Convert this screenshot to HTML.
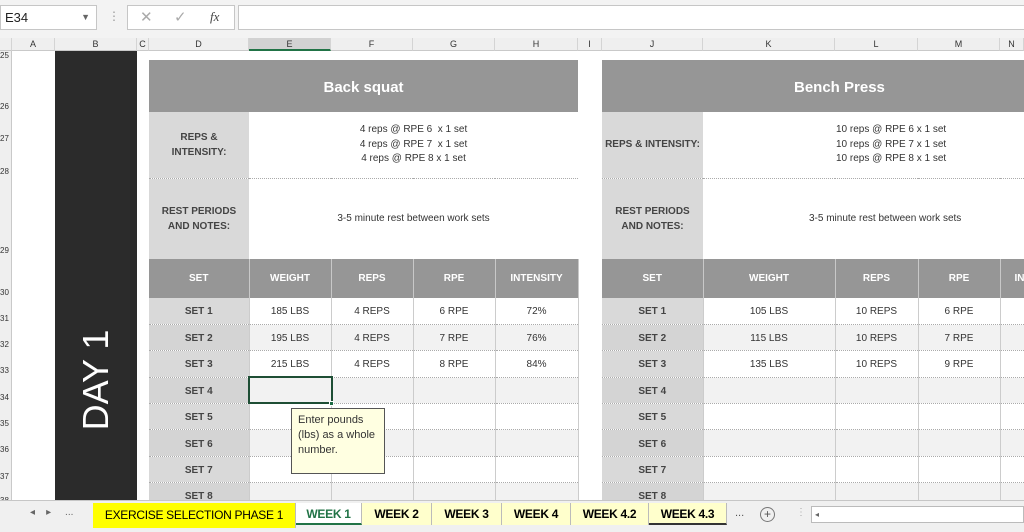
<!DOCTYPE html>
<html><head><meta charset="utf-8"><style>
*{box-sizing:border-box;margin:0;padding:0}
body{width:1024px;height:532px;overflow:hidden;background:#fff;font-family:"Liberation Sans",Arial,sans-serif;position:relative}
.abs{position:absolute}
.top{left:0;top:0;width:1024px;height:38px;background:#f3f3f3}
.nb{left:0;top:5px;width:97px;height:25px;background:#fff;border:1px solid #c6c6c6;font-size:13px;line-height:23px;padding-left:4px;color:#222}
.fx{left:127px;top:5px;width:108px;height:25px;background:#fff;border:1px solid #c6c6c6}
.fb{left:238px;top:5px;width:790px;height:25px;background:#fff;border:1px solid #c6c6c6}
.colh{top:38px;height:13px;background:#efefef;border-bottom:1px solid #c9c9c9;border-right:1px solid #d4d4d4;font-size:9px;text-align:center;line-height:13px;color:#333}
.rowh{left:0;width:12px;background:#efefef;border-right:1px solid #c9c9c9;top:51px;height:449px}
.rn{left:0;font-size:8px;color:#333;width:12px}
table{position:absolute;border-collapse:collapse;table-layout:fixed;font-size:10px;color:#333}
td{text-align:center;vertical-align:middle;padding:0;overflow:hidden;white-space:nowrap}
.t td.ttl{background:#969696;color:#fff;font-weight:bold;font-size:15px;height:52px;padding-top:2px}
.lab{background:#d9d9d9;font-weight:bold;color:#444;font-size:10px;line-height:15px;white-space:normal}
.hd td{background:#969696;color:#fff;font-weight:bold;height:39px;border-right:1px solid #c8c8c8}
.s td{height:26.4px;border-bottom:1px dotted #aaa;border-right:1px solid #ccc;padding-top:2px}
.s td:first-child{background:#d9d9d9;font-weight:bold;color:#444}
.s.a td{background:#f2f2f2}
.s.a td:first-child{background:#d4d4d4}
.tabs{left:0;top:500px;width:1024px;height:32px;background:#f0f0f0;border-top:1px solid #c6c6c6}
.tab{top:503px;height:22px;font-size:12px;font-weight:bold;line-height:22px;text-align:center;background:#ffffcc;border-right:1px solid #bbb;letter-spacing:-0.3px}
</style></head><body>
<div class="abs top"></div>
<div class="abs nb">E34<span style="position:absolute;right:6px;top:0;font-size:9px;color:#666">▼</span></div>
<div class="abs" style="left:108px;top:9px;color:#999;font-size:12px">⋮</div>
<div class="abs fx"><span style="position:absolute;left:12px;top:2px;color:#aaa;font-size:15px">✕</span><span style="position:absolute;left:46px;top:2px;color:#aaa;font-size:15px">✓</span><span style="position:absolute;left:82px;top:3px;color:#444;font-size:13px;font-style:italic;font-family:'Liberation Serif',serif">fx</span></div>
<div class="abs fb"></div>
<div class="abs colh" style="left:0;width:12px"></div>
<div class="abs colh" style="left:12px;width:43px">A</div>
<div class="abs colh" style="left:55px;width:82px">B</div>
<div class="abs colh" style="left:137px;width:12px">C</div>
<div class="abs colh" style="left:149px;width:100px">D</div>
<div class="abs colh" style="left:249px;width:82px;background:#d2d2d2;border-bottom:2px solid #217346">E</div>
<div class="abs colh" style="left:331px;width:82px">F</div>
<div class="abs colh" style="left:413px;width:82px">G</div>
<div class="abs colh" style="left:495px;width:83px">H</div>
<div class="abs colh" style="left:578px;width:24px">I</div>
<div class="abs colh" style="left:602px;width:101px">J</div>
<div class="abs colh" style="left:703px;width:132px">K</div>
<div class="abs colh" style="left:835px;width:83px">L</div>
<div class="abs colh" style="left:918px;width:82px">M</div>
<div class="abs colh" style="left:1000px;width:24px">N</div>
<div class="abs rowh"></div>
<div class="abs rn" style="top:51px">25</div><div class="abs rn" style="top:102px">26</div><div class="abs rn" style="top:134px">27</div><div class="abs rn" style="top:167px">28</div><div class="abs rn" style="top:246px">29</div><div class="abs rn" style="top:288px">30</div><div class="abs rn" style="top:314px">31</div><div class="abs rn" style="top:340px">32</div><div class="abs rn" style="top:366px">33</div><div class="abs rn" style="top:393px">34</div><div class="abs rn" style="top:419px">35</div><div class="abs rn" style="top:445px">36</div><div class="abs rn" style="top:472px">37</div><div class="abs rn" style="top:496px">38</div>
<div class="abs" style="left:55px;top:51px;width:82px;height:449px;background:#2b2b2b"></div>
<div class="abs" style="left:96px;top:380px;transform:translate(-50%,-50%) rotate(-90deg);color:#fff;font-size:36px;white-space:nowrap">DAY 1</div>

<table class="t" style="left:149px;top:60px;width:429px">
<colgroup><col style="width:100px"><col style="width:82px"><col style="width:82px"><col style="width:82px"><col style="width:83px"></colgroup>
<tr><td class="ttl" colspan="5">Back squat</td></tr>
<tr><td class="lab" style="height:66px;border-bottom:1px dotted #aaa">REPS &amp;<br>INTENSITY:</td><td colspan="4" style="line-height:14.5px;border-bottom:1px dotted #aaa">4 reps @ RPE 6&nbsp; x 1 set<br>4 reps @ RPE 7&nbsp; x 1 set<br>4 reps @ RPE 8 x 1 set</td></tr>
<tr><td class="lab" style="height:81px">REST PERIODS<br>AND NOTES:</td><td colspan="4">3-5 minute rest between work sets</td></tr>
<tr class="hd"><td>SET</td><td>WEIGHT</td><td>REPS</td><td>RPE</td><td>INTENSITY</td></tr>
<tr class="s"><td>SET 1</td><td>185 LBS</td><td>4 REPS</td><td>6 RPE</td><td>72%</td></tr>
<tr class="s a"><td>SET 2</td><td>195 LBS</td><td>4 REPS</td><td>7 RPE</td><td>76%</td></tr>
<tr class="s"><td>SET 3</td><td>215 LBS</td><td>4 REPS</td><td>8 RPE</td><td>84%</td></tr>
<tr class="s a"><td>SET 4</td><td></td><td></td><td></td><td></td></tr>
<tr class="s"><td>SET 5</td><td></td><td></td><td></td><td></td></tr>
<tr class="s a"><td>SET 6</td><td></td><td></td><td></td><td></td></tr>
<tr class="s"><td>SET 7</td><td></td><td></td><td></td><td></td></tr>
<tr class="s a"><td>SET 8</td><td></td><td></td><td></td><td></td></tr>
</table>

<table class="t" style="left:602px;top:60px;width:480px">
<colgroup><col style="width:101px"><col style="width:132px"><col style="width:83px"><col style="width:82px"><col style="width:82px"></colgroup>
<tr><td class="ttl" colspan="5" style="text-align:left;padding-left:192px">Bench Press</td></tr>
<tr><td class="lab" style="height:66px;border-bottom:1px dotted #aaa">REPS &amp; INTENSITY:</td><td colspan="4" style="line-height:14.5px;border-bottom:1px dotted #aaa;text-align:left;padding-left:133px">10 reps @ RPE 6 x 1 set<br>10 reps @ RPE 7 x 1 set<br>10 reps @ RPE 8 x 1 set</td></tr>
<tr><td class="lab" style="height:81px">REST PERIODS<br>AND NOTES:</td><td colspan="4" style="text-align:left;padding-left:106px">3-5 minute rest between work sets</td></tr>
<tr class="hd"><td>SET</td><td>WEIGHT</td><td>REPS</td><td>RPE</td><td style="text-align:left;padding-left:14px">INTENSITY</td></tr>
<tr class="s"><td>SET 1</td><td>105 LBS</td><td>10 REPS</td><td>6 RPE</td><td></td></tr>
<tr class="s a"><td>SET 2</td><td>115 LBS</td><td>10 REPS</td><td>7 RPE</td><td></td></tr>
<tr class="s"><td>SET 3</td><td>135 LBS</td><td>10 REPS</td><td>9 RPE</td><td></td></tr>
<tr class="s a"><td>SET 4</td><td></td><td></td><td></td><td></td></tr>
<tr class="s"><td>SET 5</td><td></td><td></td><td></td><td></td></tr>
<tr class="s a"><td>SET 6</td><td></td><td></td><td></td><td></td></tr>
<tr class="s"><td>SET 7</td><td></td><td></td><td></td><td></td></tr>
<tr class="s a"><td>SET 8</td><td></td><td></td><td></td><td></td></tr>
</table>

<div class="abs" style="left:248px;top:376px;width:85px;height:28px;border:2px solid #1e4e35"></div>
<div class="abs" style="left:329px;top:401px;width:5px;height:5px;background:#1e6b45;border:1px solid #fff"></div>
<div class="abs" style="left:291px;top:408px;width:94px;height:66px;background:#ffffe1;border:1px solid #555;font-size:11px;color:#333;line-height:15px;padding:4px 6px">Enter pounds (lbs) as a whole number.</div>

<div class="abs tabs"></div>
<div class="abs" style="left:30px;top:507px;font-size:10px;color:#666">◂&nbsp;&nbsp;&nbsp;&nbsp;▸&nbsp;&nbsp;&nbsp;&nbsp;&nbsp;...</div>
<div class="abs tab" style="left:93px;width:203px;background:#ffff00;font-weight:normal;height:25px;line-height:25px">EXERCISE SELECTION PHASE 1</div>
<div class="abs tab" style="left:296px;width:66px;background:#fff;color:#217346;border-bottom:2px solid #217346">WEEK 1</div>
<div class="abs tab" style="left:362px;width:70px">WEEK 2</div>
<div class="abs tab" style="left:432px;width:70px">WEEK 3</div>
<div class="abs tab" style="left:502px;width:69px">WEEK 4</div>
<div class="abs tab" style="left:571px;width:78px">WEEK 4.2</div>
<div class="abs tab" style="left:649px;width:78px;border-bottom:2px solid #333">WEEK 4.3</div>
<div class="abs" style="left:735px;top:507px;font-size:11px;color:#555">...</div>
<div class="abs" style="left:760px;top:507px;width:15px;height:15px;border:1px solid #777;border-radius:50%;font-size:12px;line-height:13px;text-align:center;color:#555">+</div>
<div class="abs" style="left:796px;top:507px;font-size:10px;color:#aaa">⋮</div>
<div class="abs" style="left:811px;top:506px;width:213px;height:17px;background:#fff;border:1px solid #bbb;font-size:8px;color:#666;padding-left:3px;line-height:15px">◂</div>
</body></html>
